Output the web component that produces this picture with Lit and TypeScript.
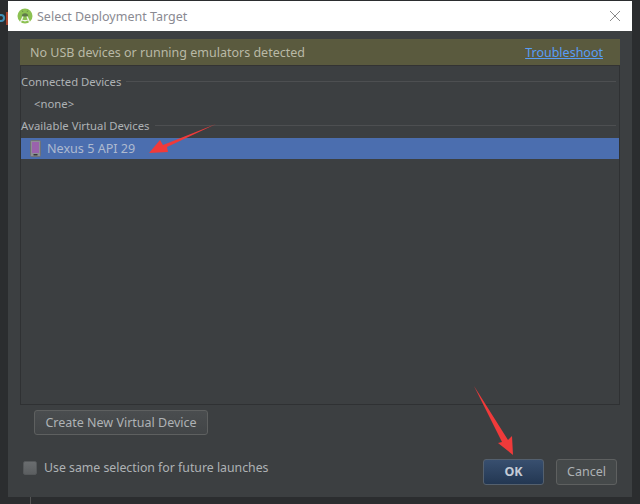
import { LitElement, html, css } from "lit";
import { customElement } from "lit/decorators.js";

@customElement("app-root")
export class AppRoot extends LitElement {
  static styles = css`
    :host { display: block; position: relative; width: 640px; height: 504px; overflow: hidden; background: #2b2d2f; font-family: "Noto Sans", "Open Sans", sans-serif; font-size: 12.5px; color: #aeb2b5; }
    .desk { padding: 1px 8px 7px 8px; height: 504px; box-sizing: border-box; }
    .dialog { height: 496px; display: flex; flex-direction: column; background: #3c3f41; }
    .title { height: 30px; flex: none; background: #fff; display: flex; align-items: center; padding: 0 10px 0 9px; gap: 4px; color: #8a8a92; font-size: 12.5px; }
    .title .txt { flex: 1; }
    .body { flex: 1; display: flex; flex-direction: column; padding: 8px 12px 0 12px; min-height: 0; }
    .banner { height: 27px; flex: none; background: #5a5a3e; display: flex; align-items: center; justify-content: space-between; padding: 0 17px 0 10px; border-bottom: 1px solid #333; box-sizing: border-box; color: #b9b9a6; }
    .link { color: #589df6; text-decoration: underline; }
    .panel { height: 339px; flex: none; box-sizing: border-box; border: 1px solid #2f3133; border-top: none; padding-top: 8px; }
    .group { display: flex; align-items: center; gap: 5px; height: 14px; padding-right: 3px; font-size: 11.3px; color: #aeb2b5; }
    .group i { flex: 1; height: 1px; background: #4d4f51; margin-top: 1px; }
    .none { height: 30px; display: flex; align-items: center; padding-left: 13px; font-size: 11.3px; color: #aeb2b5; }
    .row { margin-top: 6px; height: 21px; display: flex; align-items: center; gap: 6px; padding-left: 9px; background: #4b6eaf; color: #aebad0; font-size: 12.6px; }
    .create-wrap { flex: none; padding: 5px 0 0 14px; }
    .btn { box-sizing: border-box; height: 26px; display: inline-flex; align-items: center; justify-content: center; border: 1px solid #5e6060; border-radius: 3px; background: linear-gradient(#4a4d4f, #424547); color: #aeb2b5; font-size: 12.5px; padding-bottom: 1px; }
    .create { width: 174px; height: 25px; }
    .foot { flex: none; display: flex; align-items: center; padding: 0 3px 0 3px; margin-top: 24px; }
    .check { display: flex; align-items: center; gap: 7px; flex: 1; margin-top: -9px; font-size: 12.3px; }
    .box { width: 14px; height: 14px; box-sizing: border-box; background: linear-gradient(#6a6d6f, #5c5f61); border: 1px solid #55585a; border-radius: 2px; }
    .ok { width: 61px; background: linear-gradient(#384f6f, #233752); border-color: #54606e; color: #c4ccd6; font-weight: 700; }
    .cancel { width: 61px; margin-left: 12px; background: #45494a; }
    .vline { position: absolute; left: 30px; top: 497px; width: 1px; height: 7px; background: #555; }
    .dock { position: absolute; left: 0; top: 8px; width: 8px; height: 30px; }
    .arrow { position: absolute; left: 0; top: 0; pointer-events: none; }
  `;

  render() {
    return html`
      <div class="desk">
        <div class="dialog">
          <div class="title">
            <svg width="16" height="16" viewBox="0 0 16 16">
              <circle cx="8" cy="8" r="7.5" fill="#8cc152"/>
              <path d="M4.8 8.5 A3.2 3.2 0 0 1 11.2 8.5 Z" fill="#5f7a4a"/>
              <path d="M3.5 14 L6 8.5 M12.5 14 L10 8.5 M5 12 Q8 13.5 11 12" fill="none" stroke="#f4f6f0" stroke-width="1.3"/>
              <path d="M6 4 L5 2.5 M10 4 L11 2.5" stroke="#5f7a4a" stroke-width=".7"/>
            </svg>
            <span class="txt">Select Deployment Target</span>
            <svg width="14" height="14" viewBox="0 0 14 14"><path d="M2 2 L12 12 M12 2 L2 12" stroke="#8a8a8a" stroke-width="1" fill="none"/></svg>
          </div>
          <div class="body">
            <div class="banner"><span>No USB devices or running emulators detected</span><span class="link">Troubleshoot</span></div>
            <div class="panel">
              <div class="group"><span>Connected Devices</span><i></i></div>
              <div class="none">&lt;none&gt;</div>
              <div class="group"><span>Available Virtual Devices</span><i></i></div>
              <div class="row">
                <svg width="11" height="17" viewBox="0 0 11 17">
                  <rect x="0.5" y="0.5" width="10" height="16" rx="1" fill="#8d8f96" stroke="#6f7278"/>
                  <rect x="2" y="2" width="7" height="11" fill="#9a62ac"/>
                  <rect x="3.5" y="14.2" width="4" height="1.2" fill="#222"/>
                </svg>
                <span>Nexus 5 API 29</span>
              </div>
            </div>
            <div class="create-wrap"><div class="btn create">Create New Virtual Device</div></div>
            <div class="foot">
              <div class="check"><span class="box"></span><span>Use same selection for future launches</span></div>
              <div class="btn ok">OK</div>
              <div class="btn cancel">Cancel</div>
            </div>
          </div>
        </div>
      </div>
      <div class="vline"></div>
      <svg class="dock" viewBox="0 0 8 30">
        <circle cx="1" cy="10" r="3" fill="none" stroke="#3f8fb5" stroke-width="2"/>
        <rect x="6" y="4" width="2" height="13" fill="#a8452e"/>
      </svg>
      <svg class="arrow" width="640" height="504" viewBox="0 0 640 504">
        <path d="M216 124 L167 147 L168 152 L149 153 L160 140 L163 145 Z" fill="#f03a3a"/>
        <path d="M474 386 L508 440 L512 436 L513 455 L498 443 L502 442 Z" fill="#f03a3a"/>
      </svg>
    `;
  }
}
